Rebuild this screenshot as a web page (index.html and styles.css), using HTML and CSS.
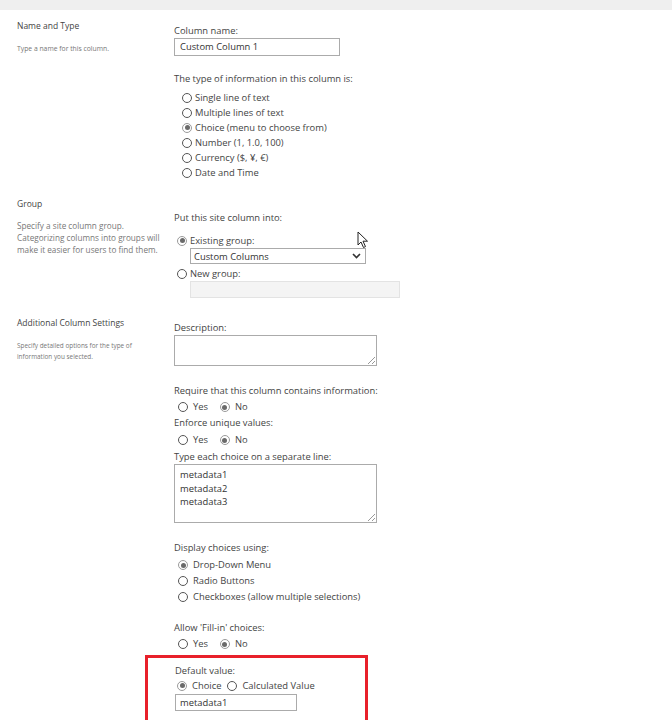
FILE: index.html
```html
<!DOCTYPE html>
<html lang="en">
<head>
    <meta charset="UTF-8">
    <title>Create Column</title>
    <link rel="stylesheet" href="styles.css">
</head>
<body>
    <div class="top-bar"></div>

    <div class="page">
        <!-- Name and Type -->
        <div class="section s-name">
            <div class="section-info">
                <div class="info-title">Name and Type</div>
                <div class="info-desc">Type a name for this column.</div>
            </div>
            <div class="section-body">
                <div class="label">Column name:</div>
                <div class="text-input name-input">Custom Column 1</div>

                <div class="label gap-16">The type of information in this column is:</div>
                <div class="radio-list indent">
                    <div class="radio-row"><span class="radio"></span>Single line of text</div>
                    <div class="radio-row"><span class="radio"></span>Multiple lines of text</div>
                    <div class="radio-row"><span class="radio checked"></span>Choice (menu to choose from)</div>
                    <div class="radio-row"><span class="radio"></span>Number (1, 1.0, 100)</div>
                    <div class="radio-row"><span class="radio"></span>Currency ($, ¥, €)</div>
                    <div class="radio-row"><span class="radio"></span>Date and Time</div>
                </div>
            </div>
        </div>

        <!-- Group -->
        <div class="section s-group">
            <div class="section-info">
                <div class="info-title">Group</div>
                <div class="info-desc">Specify a site column group. Categorizing columns into groups will make it easier for users to find them.</div>
            </div>
            <div class="section-body">
                <div class="label">Put this site column into:</div>
                <div class="radio-row group-row"><span class="radio checked"></span>Existing group:</div>
                <div class="select">
                    <span>Custom Columns</span>
                    <svg width="9" height="6" viewBox="0 0 9 6"><path d="M1 1 L4.5 4.5 L8 1" fill="none" stroke="#333" stroke-width="1.6"/></svg>
                </div>
                <div class="radio-row group-row"><span class="radio"></span>New group:</div>
                <div class="text-input disabled-input"></div>
            </div>
        </div>

        <!-- Additional Column Settings -->
        <div class="section s-additional">
            <div class="section-info">
                <div class="info-title">Additional Column Settings</div>
                <div class="info-desc">Specify detailed options for the type of information you selected.</div>
            </div>
            <div class="section-body">
                <div class="label">Description:</div>
                <div class="textarea desc-area"><span class="grip"></span></div>

                <div class="label gap-18">Require that this column contains information:</div>
                <div class="radio-inline yes-no first">
                    <div class="radio-row"><span class="radio"></span>Yes</div>
                    <div class="radio-row"><span class="radio checked"></span>No</div>
                </div>
                <div class="label">Enforce unique values:</div>
                <div class="radio-inline yes-no second">
                    <div class="radio-row"><span class="radio"></span>Yes</div>
                    <div class="radio-row"><span class="radio checked"></span>No</div>
                </div>

                <div class="label gap-2">Type each choice on a separate line:</div>
                <div class="textarea choices-area">metadata1<br>metadata2<br>metadata3<span class="grip"></span></div>

                <div class="label gap-18">Display choices using:</div>
                <div class="radio-list display-list">
                    <div class="radio-row tall"><span class="radio checked"></span>Drop-Down Menu</div>
                    <div class="radio-row tall"><span class="radio"></span>Radio Buttons</div>
                    <div class="radio-row tall"><span class="radio"></span>Checkboxes (allow multiple selections)</div>
                </div>

                <div class="label gap-16">Allow 'Fill-in' choices:</div>
                <div class="radio-inline yes-no fill-in">
                    <div class="radio-row"><span class="radio"></span>Yes</div>
                    <div class="radio-row"><span class="radio checked"></span>No</div>
                </div>

                <div class="highlight">
                    <div class="label">Default value:</div>
                    <div class="radio-inline default-row">
                        <div class="radio-row"><span class="radio checked"></span>Choice</div>
                        <div class="radio-row"><span class="radio"></span>Calculated Value</div>
                    </div>
                    <div class="text-input default-input">metadata1</div>
                </div>
            </div>
        </div>
    </div>

    <!-- mouse pointer captured in the screenshot -->
    <svg class="cursor" width="12" height="18" viewBox="0 0 12 18">
        <path d="M1 1 L1 14 L4 11 L6.5 16.5 L8.5 15.6 L6 10.2 L10.5 10.2 Z" fill="#fff" stroke="#222" stroke-width="1" stroke-linejoin="round"/>
    </svg>
</body>
</html>
```

FILE: styles.css
```css
* {
    margin: 0;
    padding: 0;
    box-sizing: border-box;
}

body {
    font-family: 'Open Sans', 'Noto Sans', sans-serif;
    background: white;
    color: #444;
    width: 672px;
    height: 720px;
    overflow: hidden;
    position: relative;
}

.top-bar {
    height: 10px;
    background: #efefef;
}

.page {
    padding-left: 17px;
}

.section {
    display: flex;
}

.section-info {
    width: 157px;
    flex-shrink: 0;
    padding-right: 8px;
}

.info-title {
    font-size: 8.5px;
    line-height: 12px;
    color: #444;
}

.info-desc {
    color: #777;
    line-height: 12px;
}

.section-body {
    width: 260px;
}

/* per-section spacing */
.s-name .section-info { padding-top: 10px; }
.s-name .section-body { padding-top: 14px; padding-bottom: 10px; }
.s-name .info-desc { margin-top: 11px; font-size: 6.8px; }

.s-group .section-info { padding-top: 8px; padding-right: 5px; }
.s-group .section-body { padding-top: 21px; padding-bottom: 9px; }
.s-group .info-desc { margin-top: 10px; font-size: 8.2px; }

.s-additional .section-info { padding-top: 10px; }
.s-additional .section-body { padding-top: 14px; }
.s-additional .info-desc { margin-top: 11px; font-size: 6.4px; line-height: 11px; }

.label {
    font-size: 9.4px;
    line-height: 14px;
    color: #444;
}

.gap-2 { margin-top: 2px; }
.gap-16 { margin-top: 16px; }
.gap-18 { margin-top: 18px; }

.text-input {
    border: 1px solid #ababab;
    background: white;
    font-size: 9.4px;
    line-height: 15px;
    color: #333;
    padding-left: 5px;
}

.name-input {
    width: 166px;
    height: 18px;
    line-height: 16px;
}

.radio-list.indent {
    margin-top: 4px;
    padding-left: 8px;
}

.radio-row {
    display: flex;
    align-items: center;
    gap: 3px;
    font-size: 9.4px;
    line-height: 15px;
    color: #444;
}

.radio-row.tall {
    line-height: 16px;
}

.radio {
    width: 10px;
    height: 10px;
    border: 1px solid #555;
    border-radius: 50%;
    position: relative;
    flex-shrink: 0;
}

.radio.checked {
    border-color: #9a9a9a;
}

.radio.checked::after {
    content: "";
    position: absolute;
    left: 1.5px;
    top: 1.5px;
    width: 5px;
    height: 5px;
    border-radius: 50%;
    background: #6a6a6a;
}

.group-row {
    margin-top: 8px;
    padding-left: 3px;
}

.select {
    margin-left: 16px;
    width: 176px;
    height: 16px;
    border: 1px solid #ababab;
    display: flex;
    align-items: center;
    justify-content: space-between;
    padding: 0 4px 0 3px;
    font-size: 9.4px;
    color: #333;
}

.s-group .select + .group-row {
    margin-top: 2px;
}

.disabled-input {
    margin-left: 16px;
    width: 210px;
    height: 17px;
    background: #f4f4f4;
    border-color: #e3e3e3;
}

.textarea {
    position: relative;
    width: 203px;
    border: 1px solid #ababab;
    font-size: 9.4px;
    line-height: 13.5px;
    color: #333;
    padding: 3px 5px;
}

.desc-area {
    height: 31px;
}

.choices-area {
    height: 59px;
}

.grip {
    position: absolute;
    right: 1px;
    bottom: 1px;
    width: 7px;
    height: 7px;
    background: linear-gradient(135deg, transparent 45%, #999 45%, #999 55%, transparent 55%, transparent 75%, #999 75%, #999 85%, transparent 85%);
}

.radio-inline {
    display: flex;
    gap: 12px;
    padding-left: 4px;
}

.radio-inline .radio-row {
    gap: 5px;
    line-height: 16px;
}

.yes-no.first {
    margin: 1px 0 1px;
}

.yes-no.second {
    margin: 2px 0 0;
}

.yes-no.fill-in {
    margin-top: 1px;
}

.display-list {
    margin-top: 2px;
    padding-left: 4px;
}

.display-list .radio-row {
    gap: 5px;
}

.highlight {
    margin-top: 3px;
    margin-left: -29px;
    width: 223px;
    height: 72px;
    border: 3px solid #e8202a;
    padding: 6px 0 0 27px;
}

.default-row {
    padding-left: 2px;
    gap: 6px;
}

.default-row .radio-row {
    line-height: 15px;
}

.default-input {
    margin-top: 1px;
    width: 122px;
    height: 17px;
    padding-left: 4px;
}

.cursor {
    position: absolute;
    left: 357px;
    top: 231px;
}
```
